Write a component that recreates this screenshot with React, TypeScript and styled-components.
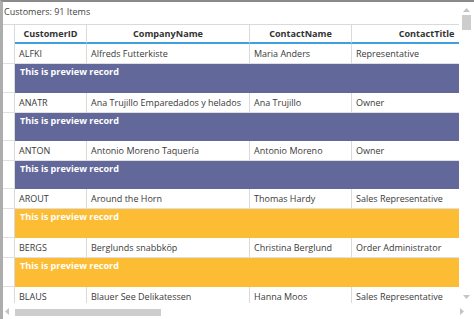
import React from "react";
import styled, { createGlobalStyle } from "styled-components";

const GlobalStyle = createGlobalStyle`
  html, body { margin: 0; padding: 0; background: #ffffff; }
  body { font-family: "Open Sans", "Noto Sans", sans-serif; }
`;

type Tone = "slate" | "amber";

interface Customer {
  id: string;
  company: string;
  contact: string;
  title: string;
  tone: Tone;
  previewHeight: number;
}

const customers: Customer[] = [
  { id: "ALFKI", company: "Alfreds Futterkiste", contact: "Maria Anders", title: "Representative", tone: "slate", previewHeight: 29 },
  { id: "ANATR", company: "Ana Trujillo Emparedados y helados", contact: "Ana Trujillo", title: "Owner", tone: "slate", previewHeight: 28 },
  { id: "ANTON", company: "Antonio Moreno Taquería", contact: "Antonio Moreno", title: "Owner", tone: "slate", previewHeight: 28 },
  { id: "AROUT", company: "Around the Horn", contact: "Thomas Hardy", title: "Sales Representative", tone: "amber", previewHeight: 29 },
  { id: "BERGS", company: "Berglunds snabbköp", contact: "Christina Berglund", title: "Order Administrator", tone: "amber", previewHeight: 29 },
  { id: "BLAUS", company: "Blauer See Delikatessen", contact: "Hanna Moos", title: "Sales Representative", tone: "amber", previewHeight: 0 },
];

const columns = ["CustomerID", "CompanyName", "ContactName", "ContactTitle"];

const toneColors: Record<Tone, string> = {
  slate: "#62689a",
  amber: "#fcbc33",
};

const Frame = styled.div`
  width: 474px;
  height: 319px;
  box-sizing: border-box;
  border-top: 2px solid #8a8a8a;
  border-left: 3px solid #adadad;
  background: #ffffff;
  display: grid;
  grid-template-columns: minmax(0, 1fr) 15px;
  grid-template-rows: minmax(0, 1fr) 16px;
  overflow: hidden;
`;

const Main = styled.div`
  grid-column: 1;
  grid-row: 1;
  display: flex;
  flex-direction: column;
  min-width: 0;
  overflow: hidden;
`;

const Caption = styled.div`
  height: 22px;
  box-sizing: border-box;
  padding: 0 0 3px 1px;
  line-height: 19px;
  font-size: 9px;
  color: #444444;
  white-space: nowrap;
`;

const Viewport = styled.div`
  flex: 1;
  min-height: 0;
  overflow: hidden;
`;

const Table = styled.div`
  display: grid;
  grid-template-columns: 12px 72px 163px 102px 150px;
  width: max-content;
`;

const HeaderIndent = styled.div`
  height: 20px;
  box-sizing: border-box;
  border-top: 1px solid #dadada;
  border-right: 1px solid #dadada;
`;

const HeaderCell = styled.div`
  height: 20px;
  box-sizing: border-box;
  border-top: 1px solid #dadada;
  border-right: 1px solid #dadada;
  border-bottom: 2px solid #40a0df;
  line-height: 17px;
  text-align: center;
  font-size: 9.1px;
  font-weight: 700;
  color: #333333;
  white-space: nowrap;
  overflow: hidden;
`;

const Indent = styled.div<{ $h: number }>`
  height: ${(p) => p.$h}px;
  box-sizing: border-box;
  border-right: 1px solid #dadada;
  border-bottom: 1px solid #e0e0e0;
`;

const Cell = styled.div`
  height: 20px;
  box-sizing: border-box;
  padding: 0 4px;
  border-right: 1px solid #dadada;
  border-bottom: 1px solid #e0e0e0;
  line-height: 19px;
  font-size: 9px;
  color: #3a3a3a;
  white-space: nowrap;
  overflow: hidden;
`;

const Preview = styled.div<{ $tone: Tone; $h: number }>`
  grid-column: 2 / -1;
  height: ${(p) => p.$h}px;
  box-sizing: border-box;
  padding: 1px 5px 0;
  background: ${(p) => toneColors[p.$tone]};
  color: #ffffff;
  font-size: 9.1px;
  font-weight: 700;
  line-height: 13px;
  white-space: nowrap;
`;

const VScroll = styled.div`
  grid-column: 2;
  grid-row: 1;
  display: flex;
  flex-direction: column;
  align-items: center;
  padding: 6px 0 4px;
  box-sizing: border-box;
  background: #ffffff;
`;

const VThumb = styled.div`
  width: 9px;
  height: 15px;
  margin-top: 3px;
  background: #cdcdcd;
`;

const Spacer = styled.div`
  flex: 1;
`;

const HScroll = styled.div`
  grid-column: 1 / -1;
  grid-row: 2;
  display: flex;
  align-items: center;
  padding: 0 10px 0 2px;
  background: #ffffff;
`;

const HThumb = styled.div`
  width: 146px;
  height: 7px;
  margin-left: 6px;
  margin-top: 3px;
  background: #cdcdcd;
`;

const ArrowBox = styled.svg<{ $push?: boolean }>`
  display: block;
  flex: none;
  margin-left: ${(p) => (p.$push ? "auto" : "0")};
`;

type Dir = "up" | "down" | "left" | "right";

function Arrow({ dir, push }: { dir: Dir; push?: boolean }) {
  const vertical = dir === "up" || dir === "down";
  const w = vertical ? 7 : 4;
  const h = vertical ? 4 : 7;
  const points =
    dir === "up"
      ? "0,4 3.5,0 7,4"
      : dir === "down"
      ? "0,0 7,0 3.5,4"
      : dir === "left"
      ? "4,0 4,7 0,3.5"
      : "0,0 4,3.5 0,7";
  return (
    <ArrowBox $push={push} width={w} height={h} viewBox={`0 0 ${w} ${h}`}>
      <polygon points={points} fill="#c4c4c4" />
    </ArrowBox>
  );
}

export default function App() {
  return (
    <>
      <GlobalStyle />
      <Frame>
        <Main>
          <Caption>Customers: 91 Items</Caption>
          <Viewport>
            <Table>
              <HeaderIndent />
              {columns.map((c) => (
                <HeaderCell key={c}>{c}</HeaderCell>
              ))}
              {customers.map((r) => (
                <React.Fragment key={r.id}>
                  <Indent $h={20} />
                  <Cell>{r.id}</Cell>
                  <Cell>{r.company}</Cell>
                  <Cell>{r.contact}</Cell>
                  <Cell>{r.title}</Cell>
                  {r.previewHeight > 0 && (
                    <>
                      <Indent $h={r.previewHeight} />
                      <Preview $tone={r.tone} $h={r.previewHeight}>
                        This is preview record
                      </Preview>
                    </>
                  )}
                </React.Fragment>
              ))}
            </Table>
          </Viewport>
        </Main>
        <VScroll>
          <Arrow dir="up" />
          <VThumb />
          <Spacer />
          <Arrow dir="down" />
        </VScroll>
        <HScroll>
          <Arrow dir="left" />
          <HThumb />
          <Arrow dir="right" push />
        </HScroll>
      </Frame>
    </>
  );
}
